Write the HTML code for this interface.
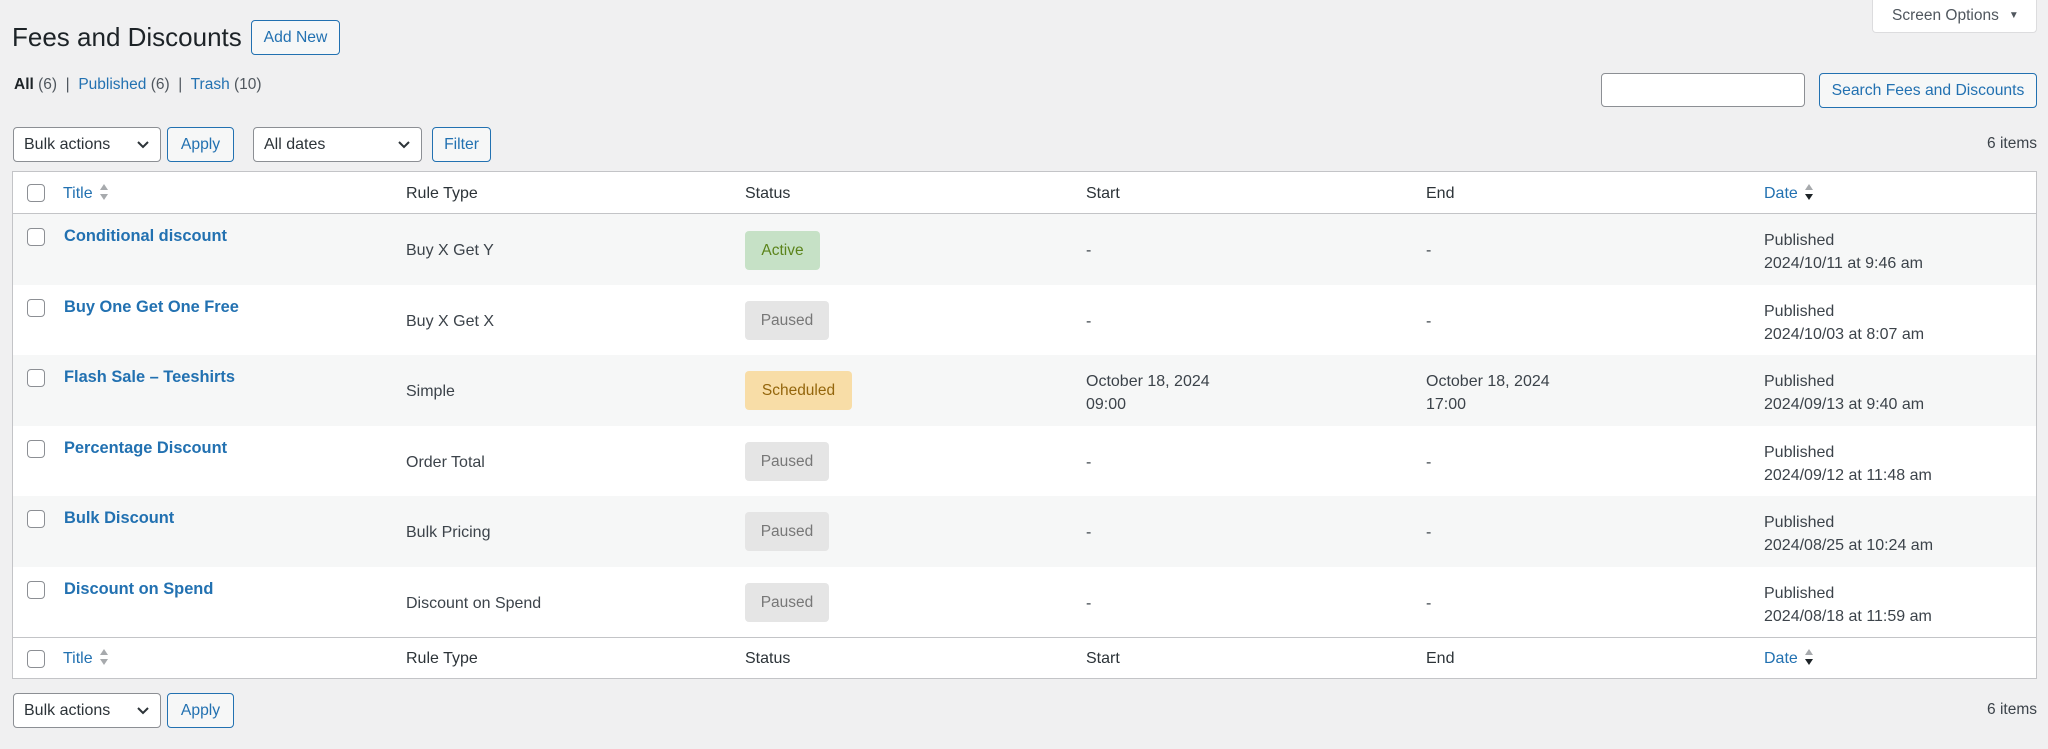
<!DOCTYPE html>
<html><head><meta charset="utf-8"><style>
*{box-sizing:border-box;margin:0;padding:0}
body{width:2048px;height:749px;background:#f0f0f1;font-family:"Liberation Sans",Arial,sans-serif;color:#3c434a;font-size:16px;position:relative;overflow:hidden}
.a{position:absolute}
.btn{position:absolute;border:1px solid #2271b1;color:#2271b1;background:#f6f7f7;border-radius:4px;font-size:15.7px;display:flex;align-items:center;justify-content:center}
.sel{position:absolute;border:1px solid #8c8f94;background:#fff;border-radius:4px;font-size:16px;color:#2c3338;padding-left:10px;display:flex;align-items:center}
.sel svg{position:absolute;right:10px;top:50%;margin-top:-5px}
.tbl{position:absolute;left:12px;top:171px;width:2025px;height:508px;border:1px solid #c3c4c7;background:#fff}
.row{position:absolute;left:0;width:2023px}
.cb{position:absolute;left:14px;width:18px;height:18px;border:1px solid #8c8f94;border-radius:4px;background:#fff}
.lnk{color:#2271b1}
.t{position:absolute;left:51px;color:#2271b1;font-weight:bold;font-size:16.4px}
.c{position:absolute;font-size:16px;color:#3c434a}
.bd{position:absolute;left:732px;height:39px;border-radius:4px;font-size:15.5px;display:flex;align-items:center;justify-content:center}
.pa{background:#e5e5e5;color:#777;width:84px}
.srt{display:inline-block;vertical-align:middle;margin-left:6px;margin-top:-3px}
</style></head><body>
<div class="a" style="left:12px;top:22px;font-size:26px;color:#1d2327">Fees and Discounts</div>
<div class="btn" style="left:251px;top:20px;width:89px;height:35px">Add New</div>
<div class="a" style="left:1872px;top:-1px;width:165px;height:34px;background:#fff;border:1px solid #dcdcde;border-top:none;border-radius:0 0 4px 4px;font-size:15.5px;color:#50575e;display:flex;align-items:center;padding-left:19px">Screen Options <span style="font-size:10px;margin-left:10px">▼</span></div>
<div class="a" style="left:14px;top:76px;font-size:15.5px;color:#50575e"><b style="color:#1d2327">All</b> (6) &nbsp;|&nbsp; <span class="lnk">Published</span> (6) &nbsp;|&nbsp; <span class="lnk">Trash</span> (10)</div>
<div class="a" style="left:1601px;top:73px;width:204px;height:34px;background:#fff;border:1px solid #8c8f94;border-radius:4px"></div>
<div class="btn" style="left:1819px;top:73px;width:218px;height:35px">Search Fees and Discounts</div>
<div class="sel" style="left:13px;top:127px;width:148px;height:35px">Bulk actions<svg width="14" height="10"><path d="M2 2l5 5 5-5" stroke="#2c3338" stroke-width="2" fill="none"/></svg></div>
<div class="btn" style="left:167px;top:127px;width:67px;height:35px">Apply</div>
<div class="sel" style="left:253px;top:127px;width:169px;height:35px">All dates<svg width="14" height="10"><path d="M2 2l5 5 5-5" stroke="#2c3338" stroke-width="2" fill="none"/></svg></div>
<div class="btn" style="left:432px;top:127px;width:59px;height:35px">Filter</div>
<div class="a" style="right:11px;top:135px;font-size:15.5px">6 items</div>

<div class="tbl">
<div class="row" style="top:0;height:42px;border-bottom:1px solid #c3c4c7">
<div class="cb" style="top:12px"></div>
<div class="c lnk" style="left:50px;top:13px;color:#2271b1">Title<svg class="srt" width="10" height="18"><path d="M1 7L5 1L9 7Z M1 11L5 17L9 11Z" fill="#a7aaad"/></svg></div>
<div class="c" style="left:393px;top:13px;color:#2c3338">Rule Type</div>
<div class="c" style="left:732px;top:13px;color:#2c3338">Status</div>
<div class="c" style="left:1073px;top:13px;color:#2c3338">Start</div>
<div class="c" style="left:1413px;top:13px;color:#2c3338">End</div>
<div class="c" style="left:1751px;top:13px;color:#2271b1">Date<svg class="srt" width="10" height="18"><path d="M1 7L5 1L9 7Z" fill="#a7aaad"/><path d="M1 11L5 17L9 11Z" fill="#1d2327"/></svg></div>
</div>

<div class="row" style="top:42px;height:71px;background:#f6f7f7">
<div class="cb" style="top:14px"></div><div class="t" style="top:13px">Conditional discount</div>
<div class="c" style="left:393px;top:28px">Buy X Get Y</div>
<div class="bd" style="top:17px;width:75px;background:#c6e1c6;color:#5b841b">Active</div>
<div class="c" style="left:1073px;top:28px">-</div><div class="c" style="left:1413px;top:28px">-</div>
<div class="c" style="left:1751px;top:15px;line-height:23px">Published<br>2024/10/11 at 9:46 am</div></div>

<div class="row" style="top:113px;height:70px;background:#fff">
<div class="cb" style="top:14px"></div><div class="t" style="top:13px">Buy One Get One Free</div>
<div class="c" style="left:393px;top:28px">Buy X Get X</div>
<div class="bd pa" style="top:16px">Paused</div>
<div class="c" style="left:1073px;top:28px">-</div><div class="c" style="left:1413px;top:28px">-</div>
<div class="c" style="left:1751px;top:15px;line-height:23px">Published<br>2024/10/03 at 8:07 am</div></div>

<div class="row" style="top:183px;height:71px;background:#f6f7f7">
<div class="cb" style="top:14px"></div><div class="t" style="top:13px">Flash Sale – Teeshirts</div>
<div class="c" style="left:393px;top:28px">Simple</div>
<div class="bd" style="top:16px;width:107px;background:#f8dda7;color:#94660c">Scheduled</div>
<div class="c" style="left:1073px;top:15px;line-height:23px">October 18, 2024<br>09:00</div>
<div class="c" style="left:1413px;top:15px;line-height:23px">October 18, 2024<br>17:00</div>
<div class="c" style="left:1751px;top:15px;line-height:23px">Published<br>2024/09/13 at 9:40 am</div></div>

<div class="row" style="top:254px;height:70px;background:#fff">
<div class="cb" style="top:14px"></div><div class="t" style="top:13px">Percentage Discount</div>
<div class="c" style="left:393px;top:28px">Order Total</div>
<div class="bd pa" style="top:16px">Paused</div>
<div class="c" style="left:1073px;top:28px">-</div><div class="c" style="left:1413px;top:28px">-</div>
<div class="c" style="left:1751px;top:15px;line-height:23px">Published<br>2024/09/12 at 11:48 am</div></div>

<div class="row" style="top:324px;height:71px;background:#f6f7f7">
<div class="cb" style="top:14px"></div><div class="t" style="top:13px">Bulk Discount</div>
<div class="c" style="left:393px;top:28px">Bulk Pricing</div>
<div class="bd pa" style="top:16px">Paused</div>
<div class="c" style="left:1073px;top:28px">-</div><div class="c" style="left:1413px;top:28px">-</div>
<div class="c" style="left:1751px;top:15px;line-height:23px">Published<br>2024/08/25 at 10:24 am</div></div>

<div class="row" style="top:395px;height:70px;background:#fff">
<div class="cb" style="top:14px"></div><div class="t" style="top:13px">Discount on Spend</div>
<div class="c" style="left:393px;top:28px">Discount on Spend</div>
<div class="bd pa" style="top:16px">Paused</div>
<div class="c" style="left:1073px;top:28px">-</div><div class="c" style="left:1413px;top:28px">-</div>
<div class="c" style="left:1751px;top:15px;line-height:23px">Published<br>2024/08/18 at 11:59 am</div></div>

<div class="row" style="top:465px;height:41px;border-top:1px solid #c3c4c7">
<div class="cb" style="top:12px"></div>
<div class="c lnk" style="left:50px;top:12px;color:#2271b1">Title<svg class="srt" width="10" height="18"><path d="M1 7L5 1L9 7Z M1 11L5 17L9 11Z" fill="#a7aaad"/></svg></div>
<div class="c" style="left:393px;top:12px;color:#2c3338">Rule Type</div>
<div class="c" style="left:732px;top:12px;color:#2c3338">Status</div>
<div class="c" style="left:1073px;top:12px;color:#2c3338">Start</div>
<div class="c" style="left:1413px;top:12px;color:#2c3338">End</div>
<div class="c" style="left:1751px;top:12px;color:#2271b1">Date<svg class="srt" width="10" height="18"><path d="M1 7L5 1L9 7Z" fill="#a7aaad"/><path d="M1 11L5 17L9 11Z" fill="#1d2327"/></svg></div>
</div>
</div>

<div class="sel" style="left:13px;top:693px;width:148px;height:35px">Bulk actions<svg width="14" height="10"><path d="M2 2l5 5 5-5" stroke="#2c3338" stroke-width="2" fill="none"/></svg></div>
<div class="btn" style="left:167px;top:693px;width:67px;height:35px">Apply</div>
<div class="a" style="right:11px;top:701px;font-size:15.5px">6 items</div>
</body></html>
